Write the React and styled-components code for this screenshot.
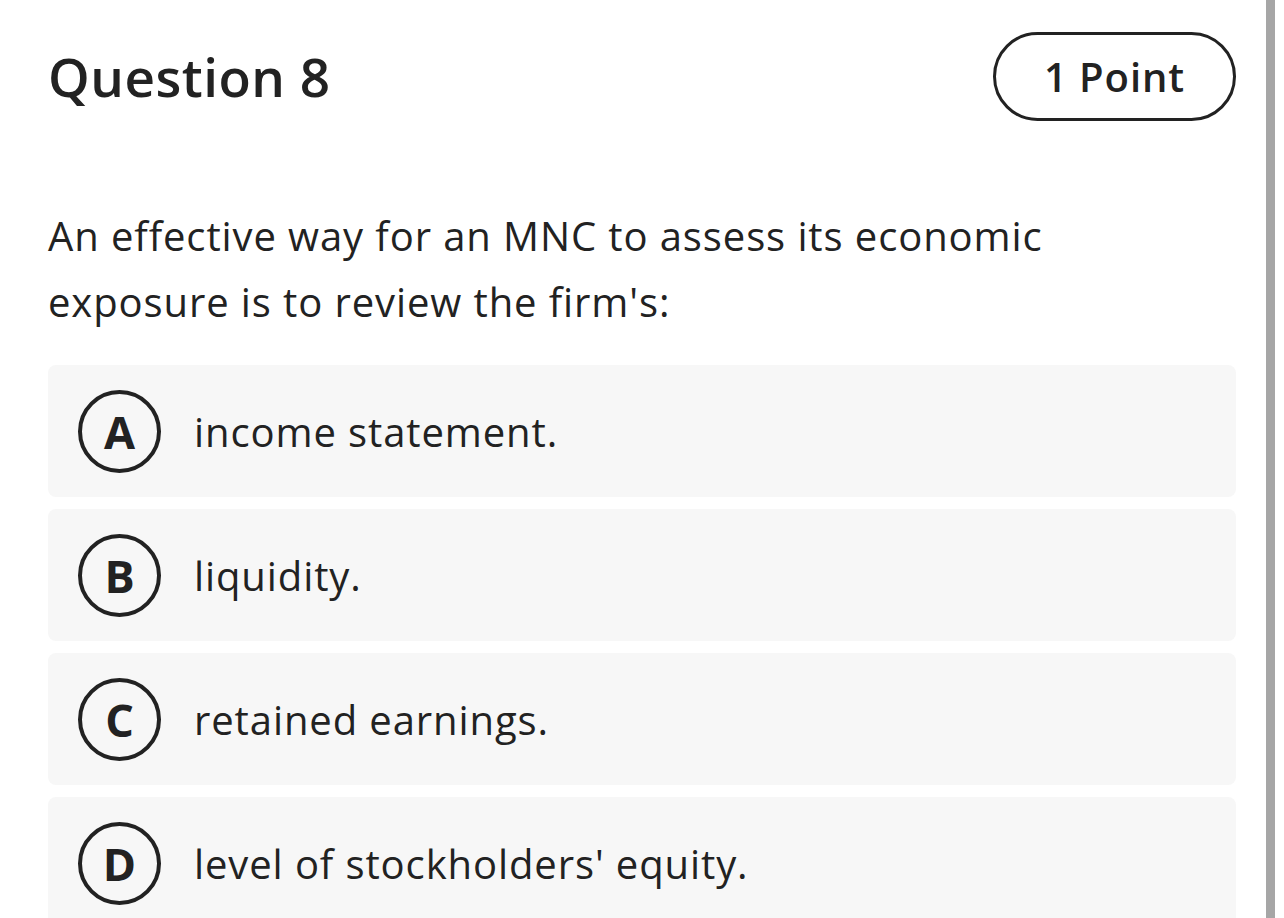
import React from "react";
import styled, { createGlobalStyle } from "styled-components";

const GlobalStyle = createGlobalStyle`
  html, body {
    margin: 0;
    padding: 0;
    background: #ffffff;
  }
  body {
    font-family: "Open Sans", "Noto Sans", sans-serif;
    color: #222222;
  }
`;

const options = [
  { letter: "A", text: "income statement." },
  { letter: "B", text: "liquidity." },
  { letter: "C", text: "retained earnings." },
  { letter: "D", text: "level of stockholders' equity." },
];

const App = () => {
  return (
    <>
      <GlobalStyle />
      <Page>
        <Content>
          <Header>
            <Title>Question 8</Title>
            <PointBadge>1 Point</PointBadge>
          </Header>
          <Prompt>
            An effective way for an MNC to assess its economic exposure is to
            review the firm's:
          </Prompt>
          <OptionList>
            {options.map((opt) => (
              <Option key={opt.letter}>
                <LetterCircle>{opt.letter}</LetterCircle>
                <OptionText>{opt.text}</OptionText>
              </Option>
            ))}
          </OptionList>
        </Content>
        <ScrollTrack />
      </Page>
    </>
  );
};

export default App;

const Page = styled.div`
  display: flex;
  align-items: stretch;
  height: 918px;
  overflow: hidden;
`;

const Content = styled.div`
  flex: 1;
  padding: 32px 30px 0 48px;
  min-width: 0;
`;

const Header = styled.div`
  display: flex;
  align-items: center;
  justify-content: space-between;
`;

const Title = styled.h1`
  margin: 0;
  font-size: 53px;
  font-weight: 600;
  letter-spacing: 0.5px;
  line-height: 1.2;
  color: #222222;
`;

const PointBadge = styled.div`
  box-sizing: border-box;
  height: 89px;
  width: 243px;
  border: 3px solid #222222;
  border-radius: 45px;
  display: flex;
  align-items: center;
  justify-content: center;
  font-size: 40px;
  font-weight: 600;
  letter-spacing: 0.9px;
  color: #222222;
`;

const Prompt = styled.p`
  margin: 82px 0 0 0;
  font-size: 40px;
  line-height: 66px;
  font-weight: 400;
  letter-spacing: 0.9px;
  max-width: 1060px;
  color: #222222;
`;

const OptionList = styled.div`
  display: flex;
  flex-direction: column;
  gap: 12px;
  margin-top: 30px;
`;

const Option = styled.div`
  box-sizing: border-box;
  height: 132px;
  background: #f7f7f7;
  border-radius: 8px;
  display: flex;
  align-items: center;
  padding-left: 30px;
  flex-shrink: 0;
`;

const LetterCircle = styled.div`
  box-sizing: border-box;
  width: 83px;
  height: 83px;
  border: 4px solid #222222;
  border-radius: 50%;
  display: flex;
  align-items: center;
  justify-content: center;
  font-size: 45px;
  font-weight: 700;
  color: #222222;
  flex-shrink: 0;
`;

const OptionText = styled.span`
  margin-left: 33px;
  font-size: 40px;
  font-weight: 400;
  letter-spacing: 0.9px;
  color: #222222;
`;

const ScrollTrack = styled.div`
  width: 9px;
  margin-right: 9px;
  background: #a6a6a6;
  flex-shrink: 0;
`;
